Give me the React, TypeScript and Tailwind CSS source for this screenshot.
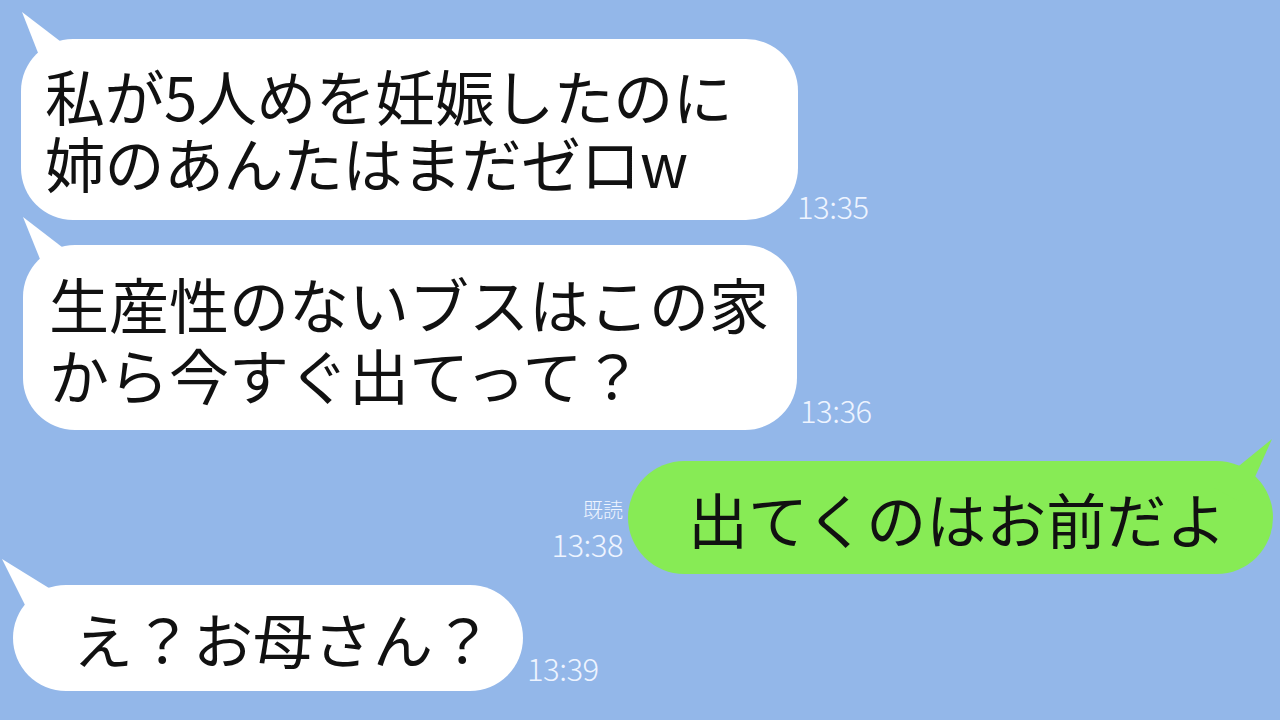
import React from "react";

const jp = { fontFamily: '"Noto Sans CJK JP", "Noto Sans", sans-serif' };

function Tail({
  points,
  fill,
  className,
}: {
  points: string;
  fill: string;
  className: string;
}) {
  return (
    <svg
      className={className}
      width="80"
      height="80"
      viewBox="0 0 80 80"
      style={{ overflow: "visible" }}
    >
      <polygon points={points} fill={fill} />
    </svg>
  );
}

function Time({ t, className }: { t: string; className?: string }) {
  return (
    <div
      className={`text-[31px] leading-[31px] font-light text-[#eef4ff] tracking-[-0.5px] ${className ?? ""}`}
      style={jp}
    >
      {t}
    </div>
  );
}

export default function App() {
  return (
    <div
      className="w-[1280px] h-[720px] overflow-hidden bg-[#93b7e9] flex flex-col pt-[39px] text-[#111111] font-normal"
      style={jp}
    >
      {/* Message 1 */}
      <div className="flex items-end pl-[21px]">
        <div className="relative w-[777px] h-[181px] bg-white rounded-[52px] flex flex-col justify-center pl-[24px] pb-[3px] text-[60px] leading-[67px] tracking-[-0.5px]">
          <Tail
            className="absolute left-0 top-0"
            fill="#ffffff"
            points="1,-27 21,24 60,30 52,12"
          />
          <div className="relative">私が5人めを妊娠したのに</div>
          <div className="relative">姉のあんたはまだゼロw</div>
        </div>
        <Time t="13:35" className="ml-[-1px] mb-[-1px]" />
      </div>

      {/* Message 2 */}
      <div className="flex items-end pl-[23px] mt-[25px]">
        <div className="relative w-[774px] h-[185px] bg-white rounded-[52px] flex flex-col justify-center pl-[26px] text-[60px] leading-[71px]">
          <Tail
            className="absolute left-0 top-0"
            fill="#ffffff"
            points="0,-28 21,24 60,30 52,12"
          />
          <div className="relative">生産性のないブスはこの家</div>
          <div className="relative">から今すぐ出てって？</div>
        </div>
        <Time t="13:36" className="ml-[3px] mb-[5px]" />
      </div>

      {/* Message 3 (mine) */}
      <div className="flex items-end justify-end pr-[7px] mt-[31px]">
        <div className="flex flex-col items-end mr-[5px] mb-[15px]">
          <div className="text-[20px] leading-[20px] font-light text-[#eef4ff] mb-[8px]">既読</div>
          <Time t="13:38" />
        </div>
        <div className="relative w-[645px] h-[113px] bg-[#87eb55] rounded-full flex items-center pl-[60px] text-[60px] leading-none">
          <Tail
            className="absolute right-0 top-0"
            fill="#87eb55"
            points="79,-22 20,26 45,40 62,16"
          />
          <div className="relative">出てくのはお前だよ</div>
        </div>
      </div>

      {/* Message 4 */}
      <div className="flex items-end pl-[13px] mt-[11px]">
        <div className="relative w-[510px] h-[106px] bg-white rounded-full flex items-center pl-[60px] text-[60px] leading-none">
          <Tail
            className="absolute left-0 top-0"
            fill="#ffffff"
            points="-11,-26 14,24 55,30 44,8"
          />
          <div className="relative">え？お母さん？</div>
        </div>
        <Time t="13:39" className="ml-[4px] mb-[8px]" />
      </div>
    </div>
  );
}
